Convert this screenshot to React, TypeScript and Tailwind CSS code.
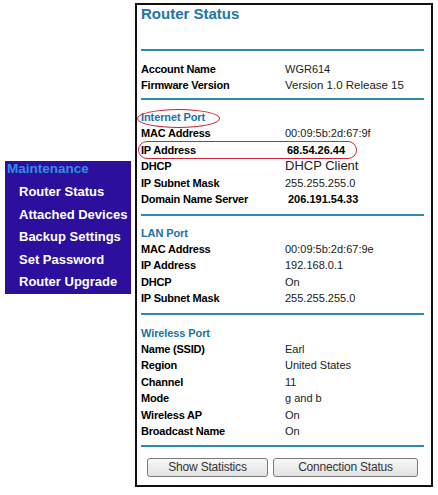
import React from "react";

type Row = { label: string; value: string; vClass?: string };

const font = { fontFamily: '"Liberation Sans", Arial, sans-serif' };

function Divider() {
  return <div className="h-[2px] bg-[#2a8db8]" />;
}

function Rows({ rows }: { rows: Row[] }) {
  return (
    <div className="grid grid-cols-[144px_1fr]">
      {rows.map((r) => (
        <React.Fragment key={r.label + r.value}>
          <div className="h-[16.5px] leading-[16.5px] text-[11px] font-bold text-black tracking-[-0.2px] whitespace-nowrap">
            {r.label}
          </div>
          <div
            className={
              "h-[16.5px] leading-[16.5px] whitespace-nowrap " +
              (r.vClass ?? "text-[11px] text-[#222]")
            }
          >
            {r.value}
          </div>
        </React.Fragment>
      ))}
    </div>
  );
}

function Heading({ children }: { children: React.ReactNode }) {
  return (
    <div className="h-[16px] leading-[16px] text-[11px] font-bold text-[#1b72a8] tracking-[-0.1px]">
      {children}
    </div>
  );
}

export default function App() {
  const menu = [
    "Router Status",
    "Attached Devices",
    "Backup Settings",
    "Set Password",
    "Router Upgrade",
  ];
  return (
    <div className="w-[438px] h-[495px] bg-white flex pl-[5px] pt-[3px]" style={font}>
      <div className="w-[126px] h-[133px] mt-[158px] bg-[#2c0f9c] flex flex-col">
        <div className="h-[16px] leading-[16px] pl-[2px] text-[13.5px] font-bold text-[#2f8fe0]">
          Maintenance
        </div>
        <div className="flex flex-col pt-[4px]">
          {menu.map((m) => (
            <div
              key={m}
              className="h-[22.5px] leading-[22.5px] pl-[14px] text-[13px] font-bold text-white whitespace-nowrap"
            >
              {m}
            </div>
          ))}
        </div>
      </div>

      <div className="relative ml-[4px] w-[298px] h-[484px] border-2 border-[#111] bg-[#fdfefd] pl-[4px] pr-[7px]">
        <div className="h-[44px]">
          <div className="h-[18px] leading-[18px] text-[15px] font-bold text-[#1d75a8]">
            Router Status
          </div>
        </div>
        <Divider />
        <div className="pt-[10px] pb-[5px]">
          <div className="grid grid-cols-[144px_1fr]">
            <div className="h-[16px] leading-[16px] text-[11px] font-bold text-black tracking-[-0.2px]">
              Account Name
            </div>
            <div className="h-[16px] leading-[16px] text-[11px] text-[#222]">WGR614</div>
            <div className="h-[16px] leading-[16px] text-[11px] font-bold text-black tracking-[-0.2px]">
              Firmware Version
            </div>
            <div className="h-[16px] leading-[16px] text-[11.5px] text-[#222] whitespace-nowrap">
              Version 1.0 Release 15
            </div>
          </div>
        </div>
        <Divider />
        <div className="pt-[9px] pb-[6px]">
          <Heading>Internet Port</Heading>
          <Rows
            rows={[
              { label: "MAC Address", value: "00:09:5b:2d:67:9f" },
              {
                label: "IP Address",
                value: "68.54.26.44",
                vClass: "text-[11px] font-bold text-black pl-[2px]",
              },
              { label: "DHCP", value: "DHCP Client", vClass: "text-[13px] text-[#222]" },
              { label: "IP Subnet Mask", value: "255.255.255.0" },
              {
                label: "Domain Name Server",
                value: "206.191.54.33",
                vClass: "text-[11px] font-bold text-black pl-[3px]",
              },
            ]}
          />
        </div>
        <Divider />
        <div className="pt-[9px] pb-[6px]">
          <Heading>LAN Port</Heading>
          <Rows
            rows={[
              { label: "MAC Address", value: "00:09:5b:2d:67:9e" },
              { label: "IP Address", value: "192.168.0.1" },
              { label: "DHCP", value: "On" },
              { label: "IP Subnet Mask", value: "255.255.255.0" },
            ]}
          />
        </div>
        <Divider />
        <div className="pt-[10px] pb-[5px]">
          <Heading>Wireless Port</Heading>
          <Rows
            rows={[
              { label: "Name (SSID)", value: "Earl" },
              { label: "Region", value: "United States" },
              { label: "Channel", value: "11" },
              { label: "Mode", value: "g and b" },
              { label: "Wireless AP", value: "On" },
              { label: "Broadcast Name", value: "On" },
            ]}
          />
        </div>
        <Divider />
        <div className="flex gap-[5px] pl-[6px] pt-[11px]">
          <button className="w-[121px] h-[19px] border border-[#7a7a7a] rounded-[3px] bg-gradient-to-b from-[#f8f8f8] to-[#e2e2e2] text-[12px] leading-[17px] text-[#333] tracking-[-0.2px]">
            Show Statistics
          </button>
          <button className="w-[145px] h-[19px] border border-[#7a7a7a] rounded-[3px] bg-gradient-to-b from-[#f8f8f8] to-[#e2e2e2] text-[12px] leading-[17px] text-[#333] tracking-[-0.2px]">
            Connection Status
          </button>
        </div>

        <div className="absolute left-0 top-[104px] w-[83px] h-[19px] rounded-[50%] border-[1.5px] border-[#c8283a]" />
        <div className="absolute left-[1px] top-[136px] w-[219px] h-[18px] rounded-[9px] border-[1.5px] border-[#c8283a]" />
      </div>
    </div>
  );
}
